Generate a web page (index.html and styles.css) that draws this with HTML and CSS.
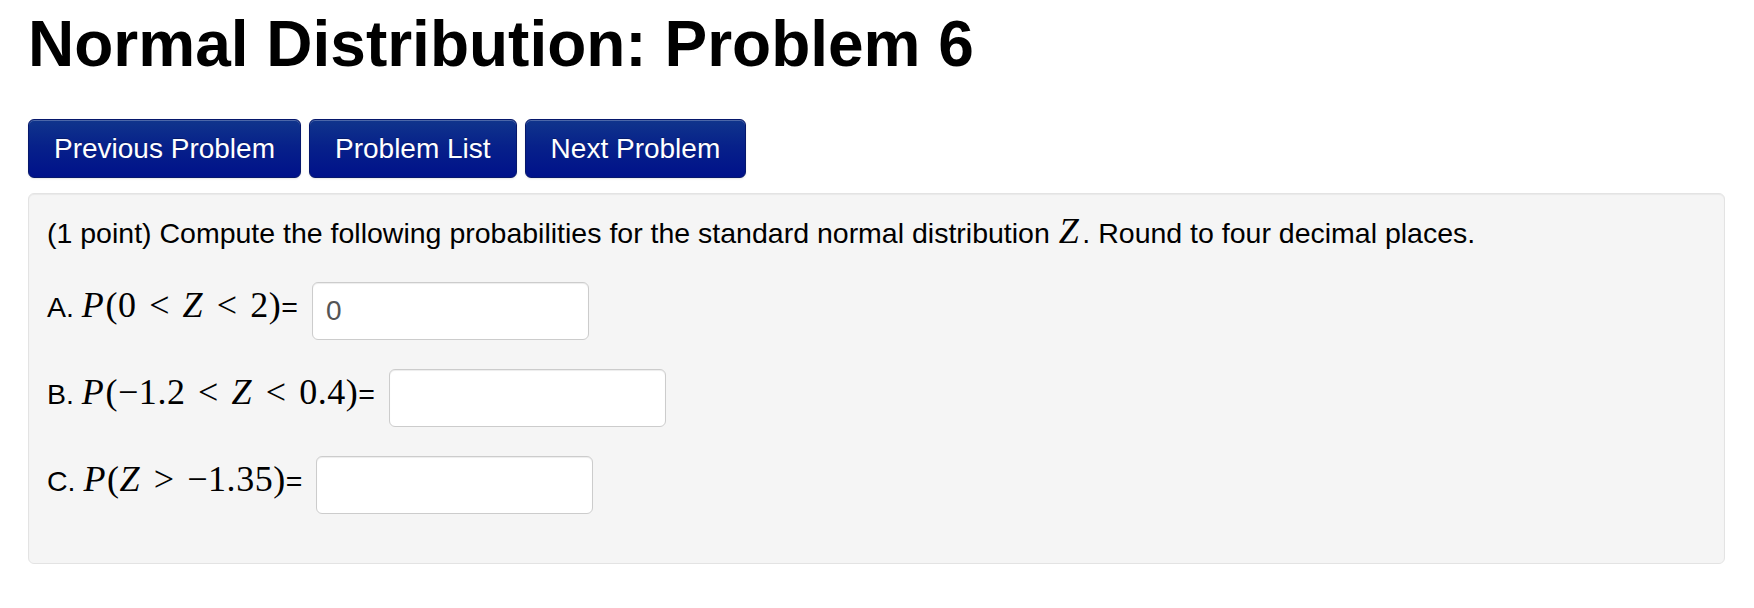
FILE: index.html
```html
<!DOCTYPE html>
<html lang="en">
<head>
<meta charset="utf-8">
<title>Normal Distribution: Problem 6</title>
<link rel="stylesheet" href="styles.css">
</head>
<body>
<div class="page">
  <h1 class="title">Normal Distribution: Problem 6</h1>
  <div class="nav">
    <a class="btn" href="#">Previous Problem</a>
    <a class="btn" href="#">Problem List</a>
    <a class="btn" href="#">Next Problem</a>
  </div>
  <div class="well">
    <p class="desc">(1 point) Compute the following probabilities for the standard normal distribution <span class="math"><i>Z</i></span>. Round to four decimal places.</p>
    <div class="row">
      <span class="label">A. <span class="math"><i>P</i>(0<span class="rel">&lt;</span><i>Z</i><span class="rel">&lt;</span>2)</span>=</span>
      <input class="answer" type="text" value="0">
    </div>
    <div class="row">
      <span class="label">B. <span class="math"><i>P</i>(&minus;1.2<span class="rel">&lt;</span><i>Z</i><span class="rel">&lt;</span>0.4)</span>=</span>
      <input class="answer" type="text" value="">
    </div>
    <div class="row">
      <span class="label">C. <span class="math"><i>P</i>(<i>Z</i><span class="rel">&gt;</span>&minus;1.35)</span>=</span>
      <input class="answer" type="text" value="">
    </div>
  </div>
</div>
</body>
</html>
```

FILE: styles.css
```css
html, body {
  margin: 0;
  padding: 0;
  background: #ffffff;
}

body {
  font-family: "Liberation Sans", Arial, Helvetica, sans-serif;
  color: #000;
}

.page {
  padding: 9px 29px 0 28px;
}

.title {
  margin: 0;
  font-size: 64px;
  line-height: 70px;
  font-weight: bold;
  color: #000;
}

.nav {
  display: flex;
  gap: 8px;
  margin-top: 40px;
}

.btn {
  display: block;
  height: 57px;
  line-height: 57px;
  padding: 0 25px;
  font-size: 28px;
  color: #fff;
  text-decoration: none;
  border: 1px solid #06176b;
  border-radius: 6px;
  background: linear-gradient(to bottom, #10358c 0%, #07218a 45%, #00118a 100%);
  box-shadow: inset 0 1px 0 rgba(255, 255, 255, 0.25), 0 1px 2px rgba(0, 0, 0, 0.1);
  text-shadow: 0 -1px 0 rgba(0, 0, 0, 0.25);
}

.well {
  margin-top: 15px;
  background: #f5f5f5;
  border: 1px solid #e3e3e3;
  border-radius: 6px;
  box-shadow: inset 0 1px 1px rgba(0, 0, 0, 0.05);
  padding: 19px 18px 49px 18px;
  display: flex;
  flex-direction: column;
  gap: 29px;
}

.desc {
  margin: 0;
  font-size: 28.5px;
  line-height: 40px;
}

.math {
  font-family: "Liberation Serif", "Times New Roman", serif;
  font-size: 36px;
  line-height: 1;
  letter-spacing: 0.015em;
}

.math i {
  font-style: italic;
  padding-right: 0.03em;
}

.desc .math {
  margin-left: 1px;
  margin-right: 2px;
}

.rel {
  padding: 0 0.35em;
}

.row {
  display: flex;
  align-items: center;
  height: 58px;
}

.label {
  font-size: 28.5px;
  line-height: 40px;
  margin-bottom: 8px;
  white-space: pre;
}

.answer {
  box-sizing: border-box;
  width: 277px;
  height: 58px;
  margin: 0 0 0 14px;
  padding: 0 13px;
  font-family: "Liberation Sans", Arial, Helvetica, sans-serif;
  font-size: 28px;
  color: #555;
  background: #fff;
  border: 1px solid #cccccc;
  border-radius: 6px;
  box-shadow: inset 0 1px 1px rgba(0, 0, 0, 0.075);
  outline: none;
}
```
